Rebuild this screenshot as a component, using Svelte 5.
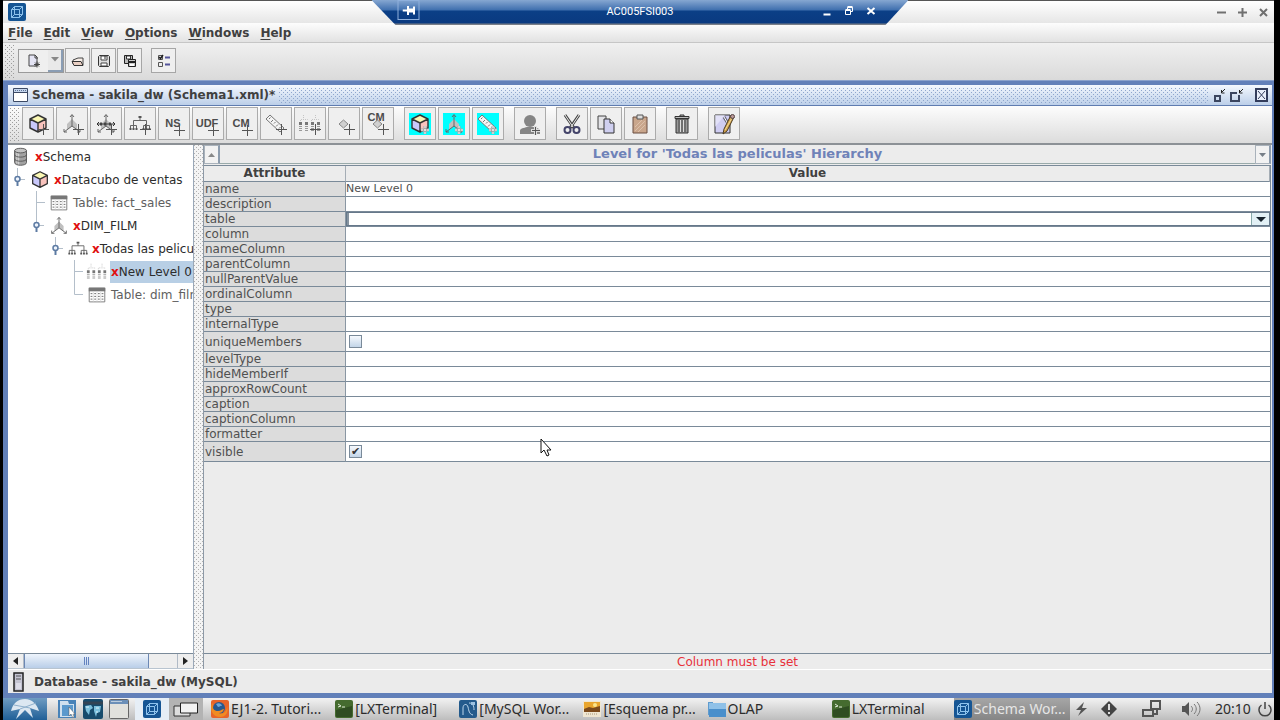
<script>
  const menus = ['File', 'Edit', 'View', 'Options', 'Windows', 'Help'];

  const toolGroups = [
    [
      ['cube', 'Add cube'], ['dimension', 'Add dimension'], ['usage', 'Add dimension usage'],
      ['hierarchy', 'Add hierarchy'], ['NS', 'Add named set'], ['UDF', 'Add user defined function'],
      ['CM', 'Add calculated member'], ['measure', 'Add measure'], ['level', 'Add level'],
      ['property', 'Add property'], ['cmprop', 'Add calculated member property']
    ],
    [['vcube', 'Add virtual cube'], ['vdim', 'Add virtual dimension'], ['vmeasure', 'Add virtual measure']],
    [['role', 'Add role']],
    [['cut', 'Cut'], ['copy', 'Copy'], ['paste', 'Paste']],
    [['trash', 'Delete']],
    [['edit', 'Edit mode']]
  ];

  const tree = [
    { icon: 'db', text: 'Schema', bad: true, guides: [] },
    { icon: 'cube', text: 'Datacubo de ventas', bad: true, guides: ['handle'] },
    { icon: 'table', text: 'Table: fact_sales', guides: ['', 'tee'] },
    { icon: 'dimension', text: 'DIM_FILM', bad: true, guides: ['', 'handle'] },
    { icon: 'hierarchy', text: 'Todas las peliculas', bad: true, guides: ['', '', 'handle'] },
    { icon: 'level', text: 'New Level 0', bad: true, selected: true, guides: ['', '', '', 'tee'] },
    { icon: 'table', text: 'Table: dim_film', guides: ['', '', '', 'elbow'] }
  ];

  let rows = $state([
    { name: 'name', value: 'New Level 0' },
    { name: 'description', value: '' },
    { name: 'table', value: '', kind: 'select' },
    { name: 'column', value: '' },
    { name: 'nameColumn', value: '' },
    { name: 'parentColumn', value: '' },
    { name: 'nullParentValue', value: '' },
    { name: 'ordinalColumn', value: '' },
    { name: 'type', value: '' },
    { name: 'internalType', value: '' },
    { name: 'uniqueMembers', value: false, kind: 'check' },
    { name: 'levelType', value: '' },
    { name: 'hideMemberIf', value: '' },
    { name: 'approxRowCount', value: '' },
    { name: 'caption', value: '' },
    { name: 'captionColumn', value: '' },
    { name: 'formatter', value: '' },
    { name: 'visible', value: true, kind: 'check' }
  ]);

  const tasks = [
    ['firefox', 'EJ1-2. Tutori...'], ['term', '[LXTerminal]'], ['mysql', '[MySQL Wor...'],
    ['image', '[Esquema pr...'], ['folder', 'OLAP'], ['term', 'LXTerminal'], ['app', 'Schema Wor...']
  ];
</script>

{#snippet plus(x, y)}
  <path d="M{x - 5} {y}h11M{x + 0.5} {y - 5.5}v11" stroke="#555" fill="none" />
{/snippet}

{#snippet cubeShape()}
  <path d="M12 3 20 7 12 11 4 7Z" fill="#fbf8b4" />
  <path d="M4 7 12 11V20L4 16Z" fill="#c9c8fb" />
  <path d="M20 7 12 11V20L20 16Z" fill="#f9c3bd" />
  <path d="M12 3 20 7V16L12 20 4 16V7ZM4 7l8 4 8-4M12 11v9" fill="none" stroke="#333" stroke-width="1.4" stroke-linejoin="round" />
{/snippet}

{#snippet axisShape()}
  <path d="M12 7 17 12 17 18 12 14 7 18 7 12Z" fill="#c0c0c0" />
  <path d="M12 3v11M12 14 4 20M12 14l8 6M10 5l2-2.500 2 2.500M4 17v3h3M17 20h3v-3" fill="none" stroke="#666" />
{/snippet}

{#snippet rulerShape()}
  <path d="M6 3 20 16 16 20 2 7Z" fill="#f4f4f4" stroke="#777" />
  <path d="M6.500 5.500 5 7M9 8 7 10M11.500 10 10 11.500M14 12.500 12 14.500M16.500 15 15 16.500" stroke="#777" />
{/snippet}

{#snippet icon(name, add)}
  <svg class="ic" viewBox="0 0 24 24" width="24" height="24" aria-hidden="true">
    {#if name === 'cube'}
      {@render cubeShape()}
      {#if add}{@render plus(17, 17.5)}{/if}
    {:else if name === 'dimension'}
      {@render axisShape()}
      {#if add}{@render plus(18, 17.5)}{/if}
    {:else if name === 'usage'}
      {@render axisShape()}
      <path d="M3 12h18M5 10l-2 2 2 2M19 10l2 2-2 2" fill="none" stroke="#333" />
      <path d="M6 10.500h2v3H6zM10 10.500h2v3h-2zM15 10.500h2v3h-2z" fill="#444" />
      {@render plus(17, 17.5)}
    {:else if name === 'hierarchy'}
      <path d="M12 4.500v4M5.500 13v-4.500h13V13M2.500 17v-3.500h6V17M15.500 17v-3.500h6V17M5.500 13v4M18.500 13v4" fill="none" stroke="#666" />
      <path d="M10.500 4h3v2h-3zM1.500 16h2v2h-2zM4.500 16h2v2h-2zM7.500 16h2v2h-2zM14.500 16h2v2h-2zM17.500 16h2v2h-2zM20.500 16h2v2h-2z" fill="#555" />
      {#if add}{@render plus(17, 17.5)}{/if}
    {:else if name === 'level'}
      <path d="M5.500 3v3M17.500 3v3M2.500 9V7.500h7V9M13.500 9V7.500h7V9" fill="none" stroke="#c4c4c4" stroke-dasharray="1 1" />
      <path d="M1 10h3v3H1zM7 10h3v3H7zM13 10h3v3h-3zM19 10h3v3h-3z" fill="#777" />
      <path d="M2.500 14v5M8.500 14v5M14.500 14v5M20.500 14v5" stroke="#999" stroke-dasharray="1 1" stroke-width="3" />
      {#if add}{@render plus(17, 17.5)}{/if}
    {:else if name === 'NS' || name === 'UDF' || name === 'CM'}
      <text x="11" y="15" text-anchor="middle" class="lbl">{name}</text>
      {@render plus(17, 18.5)}
    {:else if name === 'measure'}
      {@render rulerShape()}
      {@render plus(17, 17.5)}
    {:else if name === 'property' || name === 'cmprop'}
      {#if name === 'cmprop'}<text x="10" y="9" text-anchor="middle" class="lbl">CM</text>{/if}
      <path d="M11.500 8 16 12 11.500 16 7 12Z" fill="#d0d0d0" stroke="#888" />
      {@render plus(17, 17.5)}
    {:else if name === 'vcube' || name === 'vdim' || name === 'vmeasure'}
      <rect x="1" y="1" width="22" height="22" fill="#0ff" />
      {#if name === 'vcube'}{@render cubeShape()}{:else if name === 'vdim'}{@render axisShape()}{:else}{@render rulerShape()}{/if}
      <path d="M13 18h8M17 14v8" stroke="#aaa" stroke-width="3" />
      <path d="M13 18h8M17 14v8" stroke="#f4f4f4" stroke-dasharray="2 1" />
    {:else if name === 'role'}
      <circle cx="12" cy="9" r="6" fill="#858585" />
      <path d="M2 22v-3c0-3 4-3 7-4h6c3 1 7 1 7 4v3Z" fill="#858585" />
      <path d="M13 18.500h9M17.500 14v9" stroke="#ddd" stroke-width="3" />
      <path d="M14 18.500h8M17.500 15v8" stroke="#555" />
    {:else if name === 'cut'}
      <path d="M5 3 14 16M19 3 10 16" stroke="#444" stroke-width="3" />
      <path d="M5 3 13 15M19 3 11 15" stroke="#eee" />
      <circle cx="7.500" cy="18" r="3" fill="none" stroke="#44446a" stroke-width="2" />
      <circle cx="16.500" cy="18" r="3" fill="none" stroke="#44446a" stroke-width="2" />
    {:else if name === 'copy'}
      <path d="M4 4h8v13H4z" fill="#e2e2e6" stroke="#444" />
      <path d="M10 7h6l4 4v10H10z" fill="#cfcff0" stroke="#333" />
      <path d="M16 7v4h4" fill="#fff" stroke="#333" />
    {:else if name === 'paste'}
      <path d="M5 5h14v16H5z" fill="#c9a68c" stroke="#6b4f42" />
      <path d="M7 19 17 9M7 15l7-7M10 20l7-7" stroke="#dcc0aa" />
      <path d="M9 3h6v4H9z" fill="#ddd" stroke="#555" />
    {:else if name === 'trash'}
      <path d="M6 7h12v14H6z" fill="#999" stroke="#333" />
      <path d="M9 8v12M12 8v12M15 8v12" stroke="#444" />
      <path d="M10.500 8v12M13.500 8v12" stroke="#ddd" />
      <path d="M5 4.500h14v2H5zM10 4.500v-1.500h4v1.500" fill="#bbb" stroke="#333" />
    {:else if name === 'edit'}
      <path d="M3 3h15v18H3z" fill="#cfcdf2" stroke="#333" />
      <path d="M3 3h10L3 15z" fill="#efeffc" opacity=".6" />
      <path d="M12 5l3 5" stroke="#667" stroke-width="3" />
      <path d="M12 5l3 5" stroke="#fff" />
      <path d="M19 3l3 2-7 14-4 3 1-5z" fill="#d5a64e" stroke="#4a3a22" />
      <path d="M20 6l-7 12" stroke="#f2d898" />
      <circle cx="20.500" cy="4.500" r="2" fill="#b99" stroke="#544" />
    {:else if name === 'db'}
      <path d="M5 5v13c0 4 13 4 13 0V5" fill="#a2a2a2" stroke="#555" />
      <path d="M7.500 7v12M9.500 8v12" stroke="#e0e0e0" />
      <ellipse cx="11.500" cy="5" rx="6.500" ry="2.500" fill="#c4c4c4" stroke="#555" />
      <path d="M5 9.500c0 3.500 13 3.500 13 0M5 14c0 3.500 13 3.500 13 0" fill="none" stroke="#555" />
    {:else if name === 'table'}
      <path d="M3.500 4.500h17v15h-17z" fill="#fff" stroke="#777" />
      <path d="M3 4h18v4H3z" fill="#777" />
      <path d="M5 10.500h14M5 13.500h14M5 16.500h14" stroke="#666" stroke-dasharray="2 2" />
      <path d="M8 8v11M12 8v11M16 8v11" stroke="#ddd" />
    {/if}
  </svg>
{/snippet}

{#snippet appIcon()}
  <svg class="ic" viewBox="0 0 18 18" width="18" height="18" aria-hidden="true">
    <rect width="18" height="18" rx="2" fill="#155594" />
    <path d="M3.500 6.500h8v8h-8zM6.500 3.500h8v8h-8zM3.500 6.500l3-3M11.500 6.500l3-3M11.500 14.500l3-3M3.500 14.500l3-3" fill="none" stroke="#8fc4ee" />
  </svg>
{/snippet}

{#snippet task(name)}
  {#if name === 'app'}
    {@render appIcon()}
  {:else}
    <svg class="ic" viewBox="0 0 18 18" width="18" height="18" aria-hidden="true">
      {#if name === 'firefox'}
        <rect width="18" height="18" rx="2" fill="#e8642a" />
        <circle cx="8" cy="8" r="6" fill="#27588f" />
        <path d="M2 3c-1 6 1 8 5 8 3 0 4-2 6-2-1 3-3 4-5 4 4 2 8-1 8-7 2 6-1 11-7 11S0 12 0 8c0-3 1-4 2-5Z" fill="#f08b22" />
        <path d="M5 4c3-2 6 0 6 2-2-1-2 1-4 1Z" fill="#6fa7d8" />
      {:else if name === 'term'}
        <rect width="18" height="18" rx="2" fill="#456b2f" />
        <path d="M1 10 17 6v10a1 1 0 0 1-1 1H2a1 1 0 0 1-1-1Z" fill="#2f4d22" />
        <path d="M3 4l3 2-3 1M7 7h3" fill="none" stroke="#dfead6" />
      {:else if name === 'mysql'}
        <rect width="18" height="18" rx="2" fill="#235a8c" />
        <path d="M4 15V8c0-4 4-5 5-1s1 7 5 8M10 3c4 0 5 3 5 7" fill="none" stroke="#bcd6ec" />
        <path d="M12 2h4v3h-4z" fill="#9cc2e2" />
      {:else if name === 'image'}
        <rect y="1" width="18" height="16" fill="#efe6d2" />
        <rect x="1" y="2" width="16" height="9" fill="#e9a52d" />
        <path d="M1 9l5-2 4 1 7-2v6H1z" fill="#7b4a1c" />
        <circle cx="12" cy="5" r="2" fill="#fbe58b" />
        <path d="M3 14h12" stroke="#a89878" stroke-dasharray="1 1" />
      {:else if name === 'folder'}
        <path d="M0 2h5v13H0z" fill="#5f9bce" />
        <path d="M1 3h17v14H1z" fill="#8fc1e8" />
        <path d="M1 9h17v8H1z" fill="#4a8fcb" />
      {/if}
    </svg>
  {/if}
{/snippet}

<div class="desktop">
  <header class="titlebar">
    {@render appIcon()}
    <div class="wm">
      <button aria-label="Minimize"><svg width="11" height="11" viewBox="0 0 11 11"><path d="M1 5.500h9" /></svg></button>
      <button aria-label="Maximize"><svg width="11" height="11" viewBox="0 0 11 11"><path d="M1 5.500h9M5.500 1v9" /></svg></button>
      <button aria-label="Close"><svg width="11" height="11" viewBox="0 0 11 11"><path d="M2 2l7 7M9 2l-7 7" /></svg></button>
    </div>
  </header>

  <nav class="menubar">
    {#each menus as m}
      <button><u>{m[0]}</u>{m.slice(1)}</button>
    {/each}
  </nav>

  <div class="maintools">
    <span class="grip"></span>
    <div class="filetools">
      <div class="newbox">
        <button class="new" aria-label="New">
          <svg width="16" height="16" viewBox="0 0 16 16"><path d="M3 2h6l2 2v9H3z" fill="#e4e4f4" stroke="#444" /><path d="M9 2v3h3" fill="none" stroke="#444" /><path d="M8 11.500h6M11 8.500v6M9 9.500l4 4M13 9.500l-4 4" stroke="#444" /></svg>
        </button>
        <button class="drop" aria-label="New options"><svg width="8" height="5" viewBox="0 0 8 5"><path d="M0 0h8L4 4.500z" fill="#888" /></svg></button>
      </div>
      <button class="sq" aria-label="Open"><svg width="14" height="14" viewBox="0 0 14 14"><path d="M2 10V6l5-2h5v7" fill="#f7eee8" stroke="#444" /><path d="M1 7.500h9l2 4H3z" fill="#e9cfc3" stroke="#333" /></svg></button>
      <button class="sq" aria-label="Save"><svg width="14" height="14" viewBox="0 0 14 14"><path d="M1.500 2.500l1-1h9l1 1v9l-1 1h-9l-1-1z" fill="#ddd" stroke="#333" /><path d="M4 2h6v4H4zM4 9h6v3H4z" fill="#fff" stroke="#444" /><path d="M8 2v3" stroke="#333" /></svg></button>
      <button class="sq" aria-label="Save as"><svg width="14" height="14" viewBox="0 0 14 14"><path d="M1.500 1.500h8v8h-8z" fill="#bbb" stroke="#222" /><path d="M3.500 2h4v3h-4z" fill="#fff" stroke="#333" /><path d="M5.500 5.500h7v7h-7z" fill="#ccc" stroke="#222" /><path d="M6 7h6v2H6z" fill="#222" /><path d="M7 10h4v2H7z" fill="#fff" /></svg></button>
      <button class="sq apart" aria-label="Preferences"><svg width="14" height="14" viewBox="0 0 14 14"><path d="M1.500 1.500h4v4h-4zM1.500 8.500h4v4h-4z" fill="#eee" stroke="#555" /><path d="M2 3l1.500 1.500L6 1" fill="none" stroke="#222" stroke-width="1.500" /><path d="M8 3.500h5M8 10.500h5" stroke="#55559a" stroke-width="2" /></svg></button>
    </div>
  </div>

  <main class="mdi">
    <section class="frame">
      <header class="frametitle">
        <svg width="15" height="14" viewBox="0 0 15 14"><path d="M.5.5h14v13H.5z" fill="#fff" stroke="#3c4a66" /><path d="M1 1h13v3H1z" fill="#c5d6ee" /><path d="M1 4.500h13" stroke="#3c4a66" /><path d="M2 2.500h11" stroke="#5d7295" stroke-dasharray="1 1" /></svg>
        <h1>Schema - sakila_dw (Schema1.xml)*</h1>
        <span class="bumps"></span>
        <button aria-label="Iconify"><svg width="13" height="14" viewBox="0 0 13 14"><path d="M2 8h5v5H2z" fill="none" stroke="#3b4660" stroke-width="2" /><path d="M12 1 8 5M8.500 2v3h3" fill="none" stroke="#222" /></svg></button>
        <button aria-label="Restore"><svg width="13" height="14" viewBox="0 0 13 14"><path d="M7 5H1v8h8V7" fill="none" stroke="#3b4660" stroke-width="2" /><path d="M13 1 9 5M9.500 2v3h3" fill="none" stroke="#222" /></svg></button>
        <button class="x" aria-label="Close schema"><svg width="13" height="14" viewBox="0 0 13 14"><path d="M1 1h11v12H1z" fill="#e8eefa" stroke="#333d5c" stroke-width="2" /><path d="M3 3l7 8M10 3l-7 8" stroke="#333d5c" /></svg></button>
      </header>

      <div class="tools">
        <span class="grip"></span>
        {#each toolGroups as group}
          <div class="group">
            {#each group as [name, label]}
              <button aria-label={label}>{@render icon(name, true)}</button>
            {/each}
          </div>
        {/each}
      </div>

      <div class="split">
        <aside>
          <ul class="tree">
            {#each tree as node}
              <li>
                {#each node.guides as g}
                  <svg class="ic" width="19" height="23" viewBox="0 0 19 23" fill="none" stroke="#b4bfca">
                    {#if g === 'tee'}<path d="M9.500 0v23M9.500 11.500H18" />
                    {:else if g === 'elbow'}<path d="M9.500 0v11.500H18" />
                    {:else if g === 'handle'}
                      <path d="M9.500 0v8M12 11.500h5" />
                      <path d="M9.500 13v5" stroke="#5d7ba3" stroke-width="2" />
                      <circle cx="9.500" cy="11" r="2.500" fill="#eef4fc" stroke="#5d7ba3" stroke-width="1.500" />
                    {/if}
                  </svg>
                {/each}
                <span class="slot">{@render icon(node.icon, false)}</span>
                <span class="node" class:plain={!node.bad} class:selected={node.selected}>{#if node.bad}<b>x</b>{/if}{node.text}</span>
              </li>
            {/each}
          </ul>
          <div class="scroll">
            <button aria-label="Scroll left"><svg width="6" height="8" viewBox="0 0 6 8"><path d="M5 0v8L0 4z" fill="#222" /></svg></button>
            <div class="track"><div class="thumb"><i></i><i></i><i></i></div></div>
            <button aria-label="Scroll right"><svg width="6" height="8" viewBox="0 0 6 8"><path d="M0 0v8l5-4z" fill="#222" /></svg></button>
          </div>
        </aside>
        <div class="divider"></div>
        <section class="detail">
          <div class="paneltitle">
            <button aria-label="Previous"><svg width="7" height="4" viewBox="0 0 7 4"><path d="M0 4h7L3.500 0z" fill="#888" /></svg></button>
            <h2>Level for 'Todas las peliculas' Hierarchy</h2>
            <button aria-label="Next"><svg width="7" height="4" viewBox="0 0 7 4"><path d="M0 0h7L3.500 4z" fill="#777f88" /></svg></button>
          </div>
          <div class="tablewrap">
            <table>
              <thead><tr><th class="attr">Attribute</th><th>Value</th></tr></thead>
              <tbody>
                {#each rows as row}
                  <tr class:tall={row.kind === 'check'}>
                    <th scope="row"><label for={row.name}>{row.name}</label></th>
                    <td>
                      {#if row.kind === 'check'}
                        <input id={row.name} type="checkbox" bind:checked={row.value} />
                      {:else if row.kind === 'select'}
                        <div class="combo">
                          <select id={row.name} bind:value={row.value}><option value=""></option></select>
                          <span class="arrow"><svg width="10" height="5" viewBox="0 0 10 5"><path d="M0 0h10L5 5z" fill="#16222c" /></svg></span>
                        </div>
                      {:else}
                        <input id={row.name} type="text" bind:value={row.value} />
                      {/if}
                    </td>
                  </tr>
                {/each}
              </tbody>
            </table>
          </div>
          <p class="error">Column must be set</p>
        </section>
      </div>

      <footer class="status">
        <svg width="11" height="20" viewBox="0 0 11 20"><path d="M1 1h9v18H1z" fill="#c4c4d2" stroke="#222" stroke-width="1.500" /><path d="M3 4h5M3 7h5" stroke="#555" /><path d="M3 11h5v6H3z" fill="#dcdce8" /></svg>
        Database - sakila_dw (MySQL)
      </footer>
    </section>
  </main>

  <footer class="taskbar">
    <button class="start" aria-label="Menu"><svg width="32" height="22" viewBox="0 0 32 22"><path d="M2 13C4 5 9 1 16 1s12 5 14 12l-9-3 3 10-8-8-9 9 4-10z" fill="#dce7f1" /><path d="M5 7l16 3M11 11 27 5" stroke="#8fb0cc" /></svg></button>
    <div class="quick">
      <button aria-label="File manager"><svg width="20" height="20" viewBox="0 0 20 20"><path d="M1 1h18v18H1z" fill="#4782b8" /><path d="M3 2h8l1 3h5v13H3z" fill="#cfe0ee" /><path d="M5 6h11v11H5z" fill="#5a99cd" /><path d="M12 8v9l2-2 2 4 1-1-1-3h2z" fill="#fff" stroke="#555" stroke-width=".5" /></svg></button>
      <button aria-label="Web browser"><svg width="20" height="20" viewBox="0 0 20 20"><rect width="20" height="20" rx="2" fill="#174b6c" /><path d="M0 4h20" stroke="#345" stroke-width="3" /><path d="M2 7l6-1 2 3-3 2-1 5-3-4zM11 7l7 0-1 6-3 1-1 4-2-6z" fill="#7cc0dd" /><path d="M3 8h3M13 9h3M13 13h2" stroke="#e0f3fa" /></svg></button>
      <button aria-label="Show desktop"><svg width="20" height="20" viewBox="0 0 20 20"><rect x=".5" y=".5" width="19" height="19" rx="1" fill="#e1e1dd" stroke="#666" /><path d="M1 1h18v4H1z" fill="#6b8fb8" /><path d="M2 2.500h11" stroke="#bcd" /></svg></button>
    </div>
    <button class="desk on" aria-label="Desktop 1">{@render appIcon()}</button>
    <button class="desk" aria-label="Desktop 2"><svg width="26" height="15" viewBox="0 0 26 15"><path d="M1 4h16v10H1z" fill="#ddd" stroke="#333" /><path d="M7.500 1h17v10h-17z" fill="#f2f2f2" stroke="#222" /></svg></button>
    <div class="tasks">
      {#each tasks as [name, text], i}
        <button class:active={i === 6}>{@render task(name)}<span>{text}</span></button>
      {/each}
    </div>
    <div class="tray">
      <svg width="14" height="16" viewBox="0 0 14 16"><path d="M9 1 1 9h5l-3 6 9-8H7z" fill="#555" /></svg>
      <svg class="alert" width="18" height="18" viewBox="0 0 18 18"><path d="M9 1l8 8-8 8-8-8z" fill="#444" /><path d="M9 4v6M9 12v2" stroke="#ddd" stroke-width="2" /></svg>
      <svg class="net" width="20" height="18" viewBox="0 0 20 18"><path d="M9 1h9v8H9zM1 10h10v6H1zM15 9v5h-4" fill="none" stroke="#555" stroke-width="2" /></svg>
      <svg class="vol" width="20" height="16" viewBox="0 0 20 16"><path d="M1 5h3l4-4v14l-4-4H1z" fill="#555" /><path d="M10 5c2 2 2 4 0 6M13 3c3 3 3 7 0 10M16 1c4 4 4 10 0 14" fill="none" stroke="#777" /></svg>
      <time>20:10</time>
      <svg width="16" height="17" viewBox="0 0 16 17"><path d="M4.500 4a6 6 0 1 0 7 0M8 1v7" fill="none" stroke="#444" stroke-width="1.500" /></svg>
    </div>
  </footer>

  <div class="remote">
    <button class="pin" aria-label="Pin"><svg width="13" height="11" viewBox="0 0 13 11"><path d="M0 5.500h5M5.500 1v9M6 5.500h5M11.500 1.500v8" stroke="#fff" stroke-width="2" /><path d="M6 3.500h5v4H6z" fill="#fff" /></svg></button>
    <span class="host">AC005FSI003</span>
    <div class="rbtns">
      <button aria-label="Minimize session"><svg width="9" height="10" viewBox="0 0 9 10"><path d="M1 8.500h7" stroke="#fff" stroke-width="2" /></svg></button>
      <button aria-label="Restore session"><svg width="9" height="10" viewBox="0 0 9 10"><path d="M1 4.500h5v4H1zM3 3.500v-2h5v4H6.500" fill="none" stroke="#fff" /><path d="M1 4h5M3 1h5" stroke="#fff" stroke-width="2" /></svg></button>
      <button aria-label="Close session"><svg width="9" height="10" viewBox="0 0 9 10"><path d="M1 2l7 6M8 2l-7 6" stroke="#fff" stroke-width="2" /></svg></button>
    </div>
  </div>

  <svg class="cursor" width="12" height="19" viewBox="0 0 12 19" aria-hidden="true"><path d="M1 1v14l3-3 3 6 2-1-2-5h4z" fill="#fff" stroke="#111" /></svg>
</div>

<style>
  :global(body) { background: #000; }
  * { box-sizing: border-box; }
  button { font: inherit; color: inherit; border: 0; padding: 0; margin: 0; background: none; display: flex; align-items: center; justify-content: center; }
  h1, h2, p, ul { margin: 0; padding: 0; font: inherit; }
  .ic { flex: none; display: block; }

  .desktop {
    position: relative; display: flex; flex-direction: column; min-height: 100vh;
    padding: 0 6px 0 3px; background: #000; color: #404040; overflow: hidden;
    font: 12px/14px "DejaVu Sans", sans-serif;
  }
  .titlebar {
    display: flex; align-items: center; justify-content: space-between; height: 23px;
    border-top: 1px solid #555; padding: 0 5px; background: linear-gradient(#fff, #e6e6e6);
  }
  .wm { display: flex; gap: 10px; }
  .wm path { stroke: #707070; stroke-width: 2; }
  .menubar {
    display: flex; gap: 11px; height: 20px; padding-left: 5px; font-weight: bold;
    background: linear-gradient(#fdfdfd, #e2e2e2); border-bottom: 1px solid #c6c6c6;
  }
  .menubar u { text-underline-offset: 2px; }
  .maintools { display: flex; height: 37px; background: linear-gradient(#f0f0f0, #dadada); }
  .grip, .bumps, .divider {
    --dot: #9c9c9c;
    background-image:
      conic-gradient(from 270deg at 1px 1px, var(--dot) 90deg, transparent 0),
      conic-gradient(from 270deg at 1px 1px, var(--dot) 90deg, transparent 0);
    background-size: 4px 4px;
    background-position: 0 0, 2px 2px;
  }
  .grip { width: 10px; margin: 2px 2px 1px; flex: none; }
  .filetools { display: flex; align-items: center; gap: 1px; padding-left: 1px; height: 35px; }
  .newbox { display: flex; height: 24px; width: 46px; border: 1px solid #9a9a9a; background: #efefef; }
  .new { flex: 1; }
  .drop { width: 15px; border-right: 2px solid #8a9db4; border-bottom: 2px solid #8a9db4; background: #e9e9e9; }
  .sq { width: 25px; height: 25px; border: 1px solid #a6a6a6; background: #efefef; }
  .apart { margin-left: 8px; }

  .mdi { flex: 1; display: flex; padding: 4px 0 5px; background: #6280b9; border-top: 1px solid #8ba2cc; }
  .frame { flex: 1; min-width: 0; display: flex; flex-direction: column; margin: 0 2px 0 5px; background: #eee; }
  .frametitle {
    display: flex; align-items: center; gap: 4px; height: 21px; padding: 0 4px 0 5px;
    background: linear-gradient(#f4f8fe, #bccfe9); border-bottom: 1px solid #5f7cb0; font-weight: bold;
  }
  .frametitle .x { margin-left: 8px; }
  .bumps { --dot: #8ea6cd; flex: 1; height: 15px; }
  .tools { display: flex; gap: 10px; height: 39px; background: linear-gradient(#fdfdfd, #dcdcdc); border-bottom: 2px solid #8c9196; }
  .tools .grip { margin-right: -8px; }
  .group { display: flex; gap: 2px; padding-top: 1px; }
  .group button { width: 32px; height: 33px; border: 1px solid #ababab; background: #efefef; }
  .lbl { font: bold 11px "Liberation Sans", sans-serif; fill: #4c4c4c; }

  .split { flex: 1; display: flex; min-height: 0; }
  aside { width: 186px; flex: none; display: flex; flex-direction: column; background: #fff; border-right: 1px solid #9aa8b8; }
  .tree { flex: 1; list-style: none; overflow: hidden; color: #2c2c2c; }
  .tree li { display: flex; height: 23px; align-items: center; white-space: nowrap; }
  .slot { width: 26px; flex: none; display: flex; justify-content: center; }
  .slot .ic { width: 22px; height: 22px; }
  .node { display: block; height: 22px; line-height: 22px; padding-left: 1px; flex: 1; }
  .node.plain { color: #606060; }
  .node.selected { background: #b8cfe5; }
  .node b { color: #e01010; }
  .scroll { display: flex; height: 16px; border-top: 1px solid #7a8a99; border-bottom: 1px solid #b8c4d0; background: #eee; }
  .scroll button { width: 15px; }
  .track { flex: 1; border: solid #b0bac6; border-width: 0 1px; }
  .thumb {
    width: 82%; height: 14px; border: solid #6c88b4; border-width: 0 1px;
    background: linear-gradient(#eef4fc, #b9cee8); display: flex; gap: 1px; align-items: center; justify-content: center;
  }
  .thumb i { width: 1px; height: 8px; background: #6382bf; }
  .divider { --dot: #b0b0b0; width: 10px; flex: none; border-right: 1px solid #8d99a6; background-color: #f4f4f4; }
  .detail { flex: 1; min-width: 0; display: flex; flex-direction: column; padding-right: 1px; background: #ececec; }
  .paneltitle { display: flex; height: 19px; }
  .paneltitle button { width: 16px; border: 1px solid #a9b2bb; border-right: 2px solid #8d9cad; background: #f2f2f2; }
  .paneltitle h2 { flex: 1; text-align: center; font-weight: bold; font-size: 13px; line-height: 18px; color: #6f82b8; border-bottom: 1px solid #9aa; }
  .tablewrap { flex: 1; border: 1px solid #7a8a99; border-width: 1px 1px 1px 0; margin-top: 1px; }
  table { width: 100%; border-collapse: separate; border-spacing: 0; table-layout: fixed; }
  tr { height: 15px; }
  tr.tall { height: 20px; }
  th, td { padding: 0; border-bottom: 1px solid #7a8a99; }
  thead tr { height: 16px; }
  thead th { line-height: 15px; background: #ececec; border-right: 1px solid #a5adb5; }
  .attr { width: 142px; }
  tbody th { text-align: left; font-weight: normal; background: #dcdcdc; border-right: 1px solid #8a97a3; color: #505050; line-height: 14px; }
  tbody label { display: block; padding-left: 1px; }
  tbody td { background: #fff; line-height: 14px; }
  td input[type='text'] { display: block; width: 100%; height: 14px; border: 0; padding: 0; background: none; font: 11px/14px "DejaVu Sans", sans-serif; color: #505050; outline: 0; }
  input[type='checkbox'] {
    appearance: none; display: grid; place-items: center; width: 13px; height: 13px; margin: 0 0 0 3px;
    border: 1px solid #7a8a99; background: linear-gradient(#f6f9fd, #c3d5e8);
  }
  input[type='checkbox']:checked::after { content: '✔'; font: 11px/11px "DejaVu Sans", sans-serif; color: #333; }
  .combo { display: grid; grid-template-columns: 1fr 18px; height: 14px; border: 1px solid #66788a; }
  .combo select { grid-area: 1 / 1 / 2 / 3; appearance: none; width: 100%; height: 12px; border: 0; border-left: 2px solid #8794a0; background: #fff; padding: 0; border-radius: 0; outline: 0; }
  .combo .arrow { grid-area: 1 / 2; display: flex; align-items: center; justify-content: center; background: #e2f0f5; border-left: 1px solid #8aa; pointer-events: none; }
  .error { height: 15px; text-align: center; font-size: 12px; line-height: 16px; color: #e8303a; }
  .status { display: flex; align-items: center; gap: 10px; height: 24px; padding-left: 5px; font-weight: bold; border-top: 1px solid #fff; background: #ebebeb; }

  .taskbar {
    display: flex; height: 22px; background: linear-gradient(#f2f2f2, #bdbdbd); overflow: hidden;
    font: 14px/20px "Noto Sans", sans-serif; color: #2c2c2c;
  }
  .start { width: 44px; background: linear-gradient(#6f9cc2, #1f5f97); }
  .quick { display: flex; gap: 6px; padding: 0 6px 0 10px; }
  .desk { width: 34px; background: #b3b3b3; }
  .desk.on { background: #e6eef6; }
  .tasks { flex: 1; min-width: 0; display: flex; gap: 6px; padding-left: 6px; }
  .tasks button { flex: 1 1 0; min-width: 0; justify-content: flex-start; gap: 2px; padding-left: 2px; white-space: nowrap; overflow: hidden; }
  .tasks .active { background: linear-gradient(#a6a6a6, #858585); color: #e6e6e6; padding-left: 0; }
  .tray { width: 204px; flex: none; display: flex; align-items: center; gap: 6px; padding-left: 5px; }
  .tray svg { flex: none; }
  .alert { margin-left: 5px; }
  .net { margin-left: 18px; }
  .vol { margin-left: 13px; }
  .tray time { margin-left: 8px; }

  .remote {
    position: absolute; top: 0; left: 50%; transform: translateX(-50%); width: 537px; height: 25px;
    display: grid; grid-template-columns: 1fr auto 1fr; align-items: start; color: #fff;
    clip-path: polygon(0 0, 100% 0, 514px 100%, 24px 100%);
    background: linear-gradient(#86a7d1, #3f6fae 10px, #0b3f86 11px, #0a3a80 23px, #7a7f88 24px);
    font: 11px/23px Roboto, sans-serif;
  }
  .pin { width: 22px; height: 20px; margin-left: 26px; border: 1px solid #8fb0dc; }
  .rbtns { display: flex; justify-content: flex-end; gap: 13px; padding: 6px 33px 0 0; }
  .cursor { position: absolute; left: 540px; top: 438px; }
</style>
